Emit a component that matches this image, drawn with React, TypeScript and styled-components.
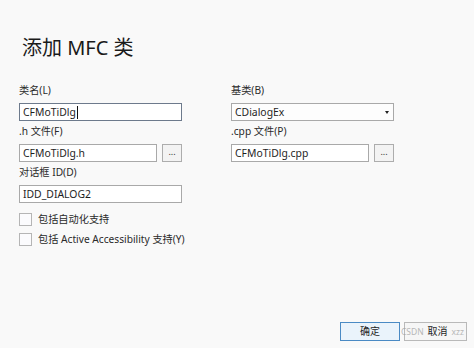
import React from "react";
import styled, { createGlobalStyle } from "styled-components";

const GlobalStyle = createGlobalStyle`
  html, body {
    margin: 0;
    padding: 0;
    background: #f9f9f9;
  }
  body {
    font-family: "Noto Sans", "Noto Sans CJK SC", sans-serif;
    color: #1e1e1e;
  }
`;

const Dialog = styled.div`
  position: relative;
  height: 348px;
  box-sizing: border-box;
  display: flex;
  flex-direction: column;
  padding: 34px 7px 7px 19px;
`;

const Title = styled.h1`
  margin: 0 0 0 3px;
  font-family: "Noto Sans", "Noto Sans CJK SC", sans-serif;
  font-size: 20px;
  font-weight: 400;
  line-height: 28px;
  color: #1a1a1a;
`;

const Form = styled.div`
  margin-top: 18px;
  display: grid;
  grid-template-columns: 163px 163px;
  column-gap: 49px;
`;

const Field = styled.div`
  display: flex;
  flex-direction: column;
`;

const Label = styled.label`
  font-size: 10.2px;
  line-height: 18px;
  padding: 1px 0 4px;
  color: #2a2a2a;
`;

const Row = styled.div`
  display: flex;
  gap: 5px;
`;

const TextBox = styled.div<{ $focused?: boolean; $width?: number }>`
  box-sizing: border-box;
  height: 18px;
  width: ${({ $width }) => ($width ? `${$width}px` : "100%")};
  border: 1px solid ${({ $focused }) => ($focused ? "#6d7a8c" : "#a9a9a9")};
  background: #fff;
  font-size: 10.4px;
  line-height: 16px;
  padding: 0 3px;
  display: flex;
  align-items: center;
  white-space: nowrap;
`;

const Caret = styled.span`
  display: inline-block;
  width: 1px;
  height: 13px;
  background: #111;
  margin-left: 1px;
`;

const Select = styled(TextBox)`
  justify-content: space-between;
  background: #fdfdfd;
`;

const Arrow = styled.span`
  width: 0;
  height: 0;
  border-left: 2.5px solid transparent;
  border-right: 2.5px solid transparent;
  border-top: 3px solid #222;
  margin-right: 1px;
`;

const BrowseButton = styled.div`
  box-sizing: border-box;
  width: 20px;
  height: 18px;
  border: 1px solid #adadad;
  background: #f3f3f3;
  font-size: 9px;
  line-height: 14px;
  text-align: center;
  color: #333;
`;

const Checks = styled.div`
  margin-top: 10px;
  display: flex;
  flex-direction: column;
  gap: 7px;
`;

const CheckRow = styled.div`
  display: flex;
  align-items: center;
  gap: 6px;
  font-size: 10.2px;
  line-height: 13px;
  color: #2a2a2a;
`;

const Box = styled.span`
  box-sizing: border-box;
  width: 13px;
  height: 13px;
  border: 1px solid #b5b5b5;
  background: #fbfbfd;
`;

const Footer = styled.div`
  margin-top: auto;
  display: flex;
  justify-content: flex-end;
  gap: 4px;
`;

const Button = styled.div<{ $primary?: boolean }>`
  box-sizing: border-box;
  width: ${({ $primary }) => ($primary ? "60px" : "63px")};
  height: 19px;
  padding-left: ${({ $primary }) => ($primary ? "0" : "4px")};
  border: 1px solid ${({ $primary }) => ($primary ? "#4a8ac4" : "#b9b9b9")};
  background: ${({ $primary }) => ($primary ? "#eaf3fb" : "#f6f6f6")};
  font-size: 10px;
  line-height: 17px;
  text-align: center;
  color: #1e1e1e;
`;

const Watermark = styled.div`
  position: absolute;
  right: 10px;
  bottom: 9px;
  width: 63px;
  display: flex;
  justify-content: space-between;
  font-size: 8.5px;
  line-height: 14px;
  color: rgba(160, 160, 160, 0.75);
  pointer-events: none;
`;

export default function App() {
  return (
    <>
      <GlobalStyle />
      <Dialog>
        <Title>添加 MFC 类</Title>
        <Form>
          <Field>
            <Label>类名(L)</Label>
            <TextBox $focused>
              CFMoTiDlg
              <Caret />
            </TextBox>
          </Field>
          <Field>
            <Label>基类(B)</Label>
            <Select>
              CDialogEx
              <Arrow />
            </Select>
          </Field>
          <Field>
            <Label>.h 文件(F)</Label>
            <Row>
              <TextBox $width={138}>CFMoTiDlg.h</TextBox>
              <BrowseButton>...</BrowseButton>
            </Row>
          </Field>
          <Field>
            <Label>.cpp 文件(P)</Label>
            <Row>
              <TextBox $width={138}>CFMoTiDlg.cpp</TextBox>
              <BrowseButton>...</BrowseButton>
            </Row>
          </Field>
          <Field>
            <Label>对话框 ID(D)</Label>
            <TextBox>IDD_DIALOG2</TextBox>
          </Field>
        </Form>
        <Checks>
          <CheckRow>
            <Box />
            包括自动化支持
          </CheckRow>
          <CheckRow>
            <Box />
            包括 Active Accessibility 支持(Y)
          </CheckRow>
        </Checks>
        <Footer>
          <Button $primary>确定</Button>
          <Button>取消</Button>
        </Footer>
        <Watermark>
          <span>CSDN</span>
          <span>xzz</span>
        </Watermark>
      </Dialog>
    </>
  );
}
